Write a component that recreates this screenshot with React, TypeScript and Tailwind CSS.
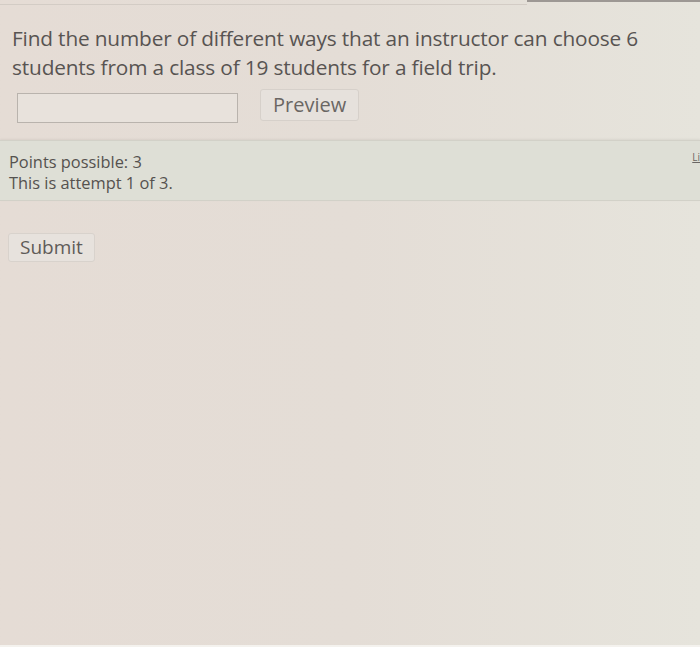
export default function App() {
  return (
    <div
      className="relative h-[647px] w-[700px] overflow-hidden bg-gradient-to-r from-[#e5dcd5] via-[#e4ddd6] to-[#e6e4dc] text-[#585452]"
      style={{ fontFamily: '"Open Sans", "Noto Sans", sans-serif' }}
    >
      {/* top edge of the question frame */}
      <div className="flex h-[6px]">
        <div className="mt-[4px] h-px flex-1 bg-[#d3ccc5]" />
        <div className="h-[2px] w-[173px] bg-[#9d9894]" />
      </div>

      <div className="px-[12px] pt-[18px]">
        <p className="text-[20.8px] leading-[29px] tracking-[-0.15px]">
          Find the number of different ways that an instructor can choose 6
          <br />
          students from a class of 19 students for a field trip.
        </p>
        <div className="mt-[7px] flex items-start gap-[22px] pl-[5px]">
          <div className="mt-[4px] h-[30px] w-[221px] border border-[#b9b3ad] bg-[#e8e2dc]" />
          <button className="h-[32px] rounded-[3px] border border-[#d6d0ca] bg-[#e6e1dc] px-[12px] text-[20px] leading-[30px] text-[#6a6663]">
            Preview
          </button>
        </div>
      </div>

      {/* info bar */}
      <div className="mt-[17px] flex h-[61px] border-t border-b border-[#d2d1c8] bg-[#dedfd6] shadow-[0_-1px_2px_rgba(0,0,0,0.06)]">
        <div className="flex-1 pl-[9px] pt-[10px] text-[16.4px] leading-[21px] text-[#55524f]">
          <div>Points possible: 3</div>
          <div>This is attempt 1 of 3.</div>
        </div>
        <div className="pt-[9px] text-[10px] text-[#6a6663] underline">
          Li
        </div>
      </div>

      <div className="pl-[8px] pt-[32px]">
        <button className="h-[29px] rounded-[3px] border border-[#d8d2cc] bg-[#e7e2dd] px-[11px] text-[19px] leading-[27px] text-[#5f5b58]">
          Submit
        </button>
      </div>

      <div className="absolute bottom-0 left-0 h-[2px] w-full bg-[#f4f2ee]" />
    </div>
  );
}
